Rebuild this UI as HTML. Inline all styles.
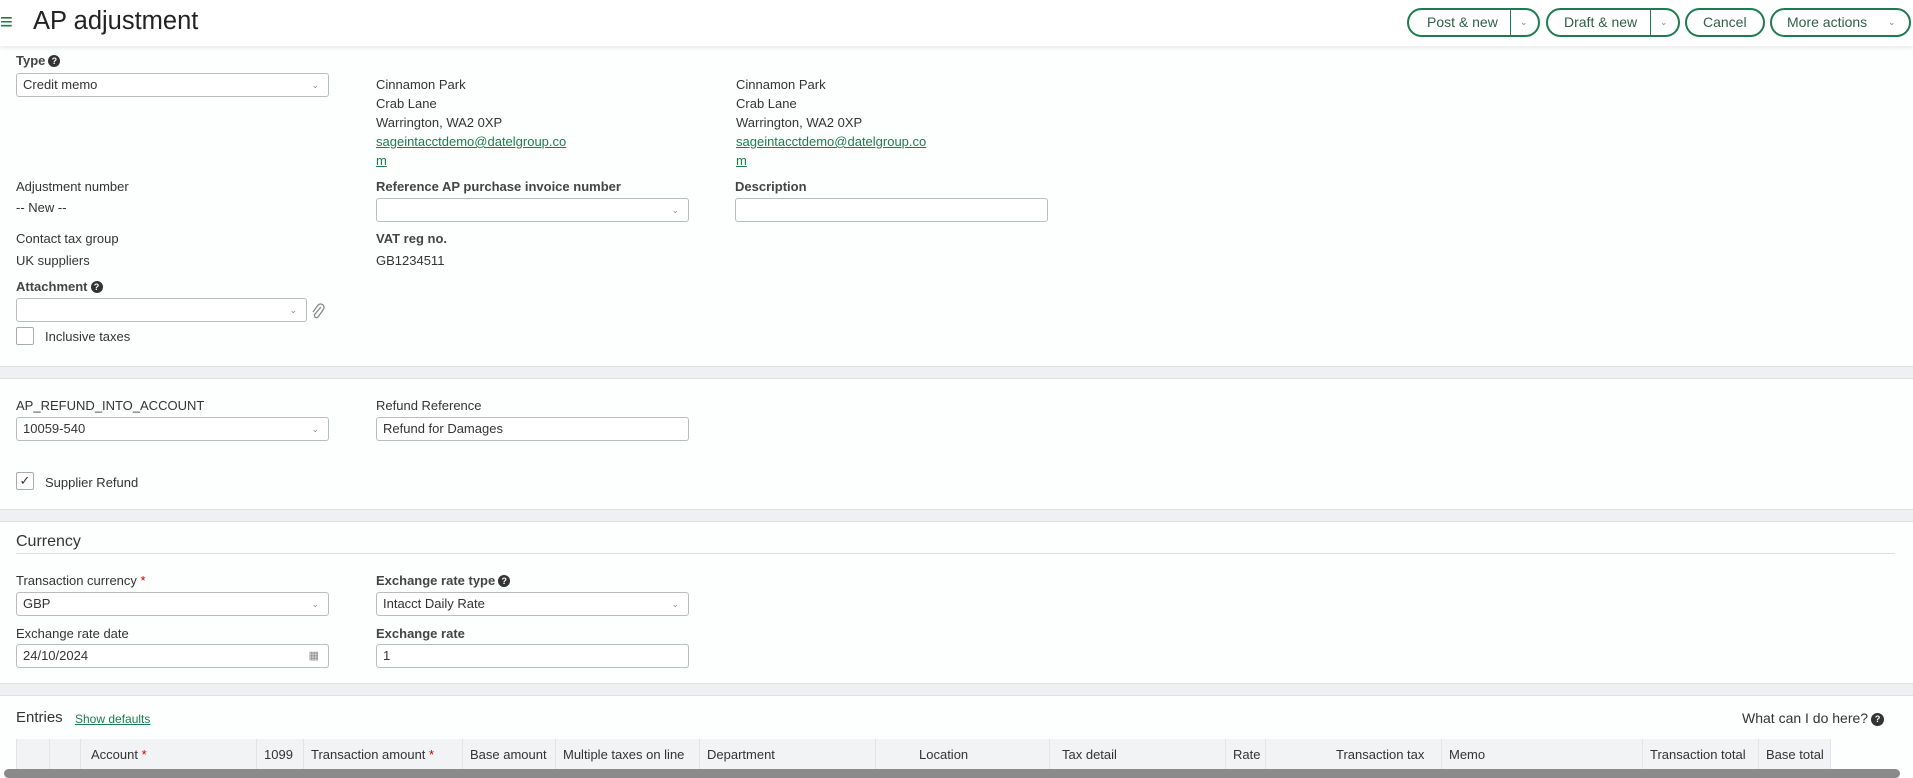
<!DOCTYPE html>
<html><head><meta charset="utf-8"><style>
*{box-sizing:border-box;margin:0;padding:0}
body{width:1913px;height:778px;overflow:hidden;background:#fdfefe;font-family:"Liberation Sans",sans-serif;color:#333;font-size:13px;position:relative}
.a{position:absolute;white-space:nowrap}
.hdr{position:absolute;left:0;top:0;width:1913px;height:46px;background:#fff;box-shadow:0 2px 4px rgba(0,0,0,.08)}
.btn{position:absolute;top:8px;height:29px;border:2px solid #1e7b4e;border-radius:15px;color:#2f5f48;font-size:14px;line-height:25px;background:#fff}
.btn span{position:absolute;top:0}
.sel{position:absolute;height:24px;border:1px solid #b9bcbe;border-radius:3px;background:#fff;font-size:13px;line-height:22px;padding-left:6px;color:#333}
.sel .c{position:absolute;right:9px;top:0;font-size:9px;color:#888}
.lbl{position:absolute;font-size:13px;color:#333}
.b{font-weight:bold;color:#444}
.q{display:inline-block;width:12px;height:12px;border-radius:50%;background:#333;color:#fff;font-size:9px;line-height:12px;text-align:center;font-weight:bold;vertical-align:1px;margin-left:3px}
.band{position:absolute;left:0;width:1913px;background:#eef0f1;border-top:1px solid #dfe2e3;border-bottom:1px solid #dfe2e3}
.lnk{color:#1e7b4e;text-decoration:underline}
.cb{position:absolute;width:18px;height:18px;border:1px solid #aaa;background:#fff;border-radius:2px}
.th{position:absolute;top:739px;height:32px;border-left:1px solid #e2e4e5;font-size:13px;line-height:32px;padding-left:7px;color:#333}
.red{color:#c00}
</style></head><body>
<div class="hdr"></div>
<div class="a" style="left:0;top:9px;font-size:22px;color:#1e7b4e">≡</div>
<div class="a" style="left:33px;top:7px;font-size:25.5px;color:#222">AP adjustment</div>

<div class="btn" style="left:1407px;width:133px"><span style="left:18px">Post &amp; new</span><span style="left:101px;height:25px;border-left:1.5px solid #1e7b4e;padding-left:9px;font-size:9px;color:#888">⌄</span></div>
<div class="btn" style="left:1546px;width:134px"><span style="left:16px">Draft &amp; new</span><span style="left:102px;height:25px;border-left:1.5px solid #1e7b4e;padding-left:9px;font-size:9px;color:#888">⌄</span></div>
<div class="btn" style="left:1685px;width:80px"><span style="left:16px">Cancel</span></div>
<div class="btn" style="left:1770px;width:141px"><span style="left:15px">More actions</span><span style="left:116px;font-size:9px;color:#888">⌄</span></div>

<div class="lbl b" style="left:16px;top:53px">Type<span class="q">?</span></div>
<div class="sel" style="left:16px;top:73px;width:313px">Credit memo<span class="c">⌄</span></div>

<div class="lbl" style="left:376px;top:75px;line-height:19px">Cinnamon Park<br>Crab Lane<br>Warrington, WA2 0XP<br><span class="lnk">sageintacctdemo@datelgroup.co</span><br><span class="lnk">m</span></div>
<div class="lbl" style="left:736px;top:75px;line-height:19px">Cinnamon Park<br>Crab Lane<br>Warrington, WA2 0XP<br><span class="lnk">sageintacctdemo@datelgroup.co</span><br><span class="lnk">m</span></div>

<div class="lbl" style="left:16px;top:179px">Adjustment number</div>
<div class="lbl" style="left:16px;top:200px">-- New --</div>
<div class="lbl b" style="left:376px;top:179px">Reference AP purchase invoice number</div>
<div class="sel" style="left:376px;top:198px;width:313px"><span class="c">⌄</span></div>
<div class="lbl b" style="left:735px;top:179px">Description</div>
<div class="sel" style="left:735px;top:198px;width:313px"></div>

<div class="lbl" style="left:16px;top:231px">Contact tax group</div>
<div class="lbl" style="left:16px;top:253px">UK suppliers</div>
<div class="lbl b" style="left:376px;top:231px">VAT reg no.</div>
<div class="lbl" style="left:376px;top:253px">GB1234511</div>

<div class="lbl b" style="left:16px;top:279px">Attachment<span class="q">?</span></div>
<div class="sel" style="left:16px;top:298px;width:291px"><span class="c">⌄</span></div>
<svg class="a" style="left:310px;top:302px" width="16" height="18" viewBox="0 0 16 18"><path d="M11 5 L5 12 a2 2 0 0 0 3 3 L13 8 a3.5 3.5 0 0 0-5-5 L3 10" fill="none" stroke="#888" stroke-width="1.3"/></svg>
<div class="cb" style="left:16px;top:327px"></div>
<div class="lbl" style="left:45px;top:329px">Inclusive taxes</div>

<div class="band" style="top:366px;height:13px"></div>

<div class="lbl" style="left:16px;top:398px">AP_REFUND_INTO_ACCOUNT</div>
<div class="sel" style="left:16px;top:417px;width:313px">10059-540<span class="c">⌄</span></div>
<div class="lbl" style="left:376px;top:398px">Refund Reference</div>
<div class="sel" style="left:376px;top:417px;width:313px">Refund for Damages</div>
<div class="cb" style="left:16px;top:472px;font-size:13px;line-height:16px;text-align:center">✓</div>
<div class="lbl" style="left:45px;top:475px">Supplier Refund</div>

<div class="band" style="top:509px;height:13px"></div>

<div class="a" style="left:16px;top:533px;font-size:16px;color:#333">Currency</div>
<div class="a" style="left:16px;top:553px;width:1879px;height:1px;background:#dcdfe0"></div>
<div class="lbl" style="left:16px;top:573px">Transaction currency <span class="red">*</span></div>
<div class="sel" style="left:16px;top:592px;width:313px">GBP<span class="c">⌄</span></div>
<div class="lbl b" style="left:376px;top:573px">Exchange rate type<span class="q">?</span></div>
<div class="sel" style="left:376px;top:592px;width:313px">Intacct Daily Rate<span class="c">⌄</span></div>
<div class="lbl" style="left:16px;top:626px">Exchange rate date</div>
<div class="sel" style="left:16px;top:644px;width:313px">24/10/2024<span class="c" style="font-size:11px">▦</span></div>
<div class="lbl b" style="left:376px;top:626px">Exchange rate</div>
<div class="sel" style="left:376px;top:644px;width:313px">1</div>

<div class="band" style="top:683px;height:13px"></div>

<div class="a" style="left:16px;top:709px;font-size:15px">Entries</div>
<div class="a lnk" style="left:75px;top:712px;font-size:12px">Show defaults</div>
<div class="a" style="left:1742px;top:710px;font-size:14px">What can I do here?<span class="q" style="width:13px;height:13px">?</span></div>

<div class="a" style="left:16px;top:739px;width:1815px;height:32px;background:#f2f3f4"></div>
<div class="th" style="left:16px"></div>
<div class="th" style="left:49px"></div>
<div class="th" style="left:80px;padding-left:10px">Account <span class="red">*</span></div>
<div class="th" style="left:256px">1099</div>
<div class="th" style="left:303px">Transaction amount <span class="red">*</span></div>
<div class="th" style="left:462px">Base amount</div>
<div class="th" style="left:555px">Multiple taxes on line</div>
<div class="th" style="left:699px">Department</div>
<div class="th" style="left:875px;padding-left:43px">Location</div>
<div class="th" style="left:1049px;padding-left:12px">Tax detail</div>
<div class="th" style="left:1225px">Rate</div>
<div class="th" style="left:1265px;padding-left:70px">Transaction tax</div>
<div class="th" style="left:1441px">Memo</div>
<div class="th" style="left:1642px">Transaction total</div>
<div class="th" style="left:1758px">Base total</div>
<div class="th" style="left:1830px"></div>
<div class="a" style="left:4px;top:769px;width:1896px;height:9px;border-radius:5px;background:#8a8a8a"></div>
</body></html>
